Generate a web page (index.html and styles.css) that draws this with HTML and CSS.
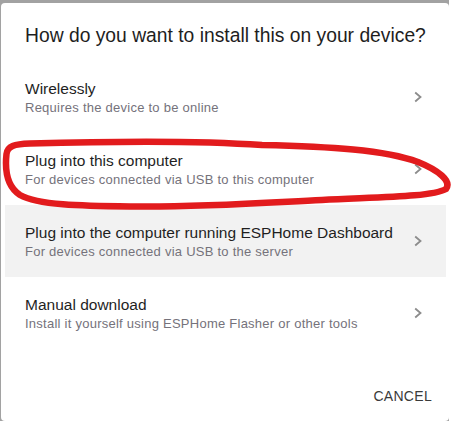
FILE: index.html
```html
<!DOCTYPE html>
<html lang="en">
<head>
<meta charset="utf-8">
<title>Install</title>
<link rel="stylesheet" href="styles.css">
</head>
<body>
<div class="backdrop">
<div class="dialog">
  <h2 class="title">How do you want to install this on your device?</h2>
  <ul class="list">
    <li class="item">
      <div class="texts">
        <span class="primary">Wirelessly</span>
        <span class="secondary">Requires the device to be online</span>
      </div>
      <svg class="chev" width="8" height="12" viewBox="0 0 8 12"><polyline points="1.2,1.5 6.5,6 1.2,10.5"/></svg>
    </li>
    <li class="item">
      <div class="texts">
        <span class="primary">Plug into this computer</span>
        <span class="secondary">For devices connected via USB to this computer</span>
      </div>
      <svg class="chev" width="8" height="12" viewBox="0 0 8 12"><polyline points="1.2,1.5 6.5,6 1.2,10.5"/></svg>
    </li>
    <li class="item hover">
      <div class="texts">
        <span class="primary">Plug into the computer running ESPHome Dashboard</span>
        <span class="secondary">For devices connected via USB to the server</span>
      </div>
      <svg class="chev" width="8" height="12" viewBox="0 0 8 12"><polyline points="1.2,1.5 6.5,6 1.2,10.5"/></svg>
    </li>
    <li class="item">
      <div class="texts">
        <span class="primary">Manual download</span>
        <span class="secondary">Install it yourself using ESPHome Flasher or other tools</span>
      </div>
      <svg class="chev" width="8" height="12" viewBox="0 0 8 12"><polyline points="1.2,1.5 6.5,6 1.2,10.5"/></svg>
    </li>
  </ul>
  <div class="actions">
    <button class="btn">CANCEL</button>
  </div>
</div>
</div>
<svg class="scribble" width="453" height="422" viewBox="0 0 453 422">
  <path d="M30,143.5 C100,141.5 200,140.5 262,145 C330,146.5 385,150 418,162 C438,170 452,181 446,189 C432,197 380,197 322,200 C262,203 200,207.5 130,206.5 C80,206 38,205 20,195 C6,186 5,168 6.5,154 C7.5,146 14,144 30,143.5"/>
</svg>
</body>
</html>
```

FILE: styles.css
```css
html, body {
  margin: 0;
  padding: 0;
}

body {
  background: #ffffff;
  width: 453px;
  height: 422px;
  overflow: hidden;
  position: relative;
  font-family: "Liberation Sans", Arial, sans-serif;
}

.backdrop {
  width: 449px;
  height: 421px;
  box-sizing: border-box;
  padding: 3px 0 0 1px;
  background: #a2a2a2;
}

.dialog {
  width: 448px;
  height: 418px;
  background: #ffffff;
  border-radius: 4px;
  display: flex;
  flex-direction: column;
}

.title {
  margin: 0;
  padding: 17px 24px 0 24px;
  font-size: 19.3px;
  line-height: 32px;
  font-weight: normal;
  color: #1e1e1e;
  white-space: nowrap;
}

.list {
  list-style: none;
  margin: 9px 3px 0 4px;
  padding: 0;
}

.item {
  height: 72px;
  box-sizing: border-box;
  padding: 0 24px 0 20px;
  display: flex;
  align-items: center;
  justify-content: space-between;
}

.item.hover {
  background: #f2f2f2;
}

.texts {
  display: flex;
  flex-direction: column;
  align-self: flex-start;
  padding-top: 18px;
}

.primary {
  font-size: 15.5px;
  line-height: 20px;
  color: #1f1f1f;
  white-space: nowrap;
}

.secondary {
  font-size: 13px;
  line-height: 18px;
  letter-spacing: 0.25px;
  color: #75727b;
  white-space: nowrap;
}

.chev {
  flex: none;
}

.chev polyline {
  fill: none;
  stroke: #8c8c8c;
  stroke-width: 1.8;
}

.actions {
  margin-top: auto;
  display: flex;
  justify-content: flex-end;
  padding: 0 17px 7px 0;
}

.btn {
  border: 0;
  background: transparent;
  padding: 0;
  height: 36px;
  line-height: 36px;
  font-family: "Liberation Sans", Arial, sans-serif;
  font-size: 14px;
  letter-spacing: 0.3px;
  color: #3a3a3a;
}

.scribble {
  position: absolute;
  top: 0;
  left: 0;
  pointer-events: none;
}

.scribble path {
  fill: none;
  stroke: #e21b1d;
  stroke-width: 6.5;
  stroke-linecap: round;
  stroke-linejoin: round;
}
```
